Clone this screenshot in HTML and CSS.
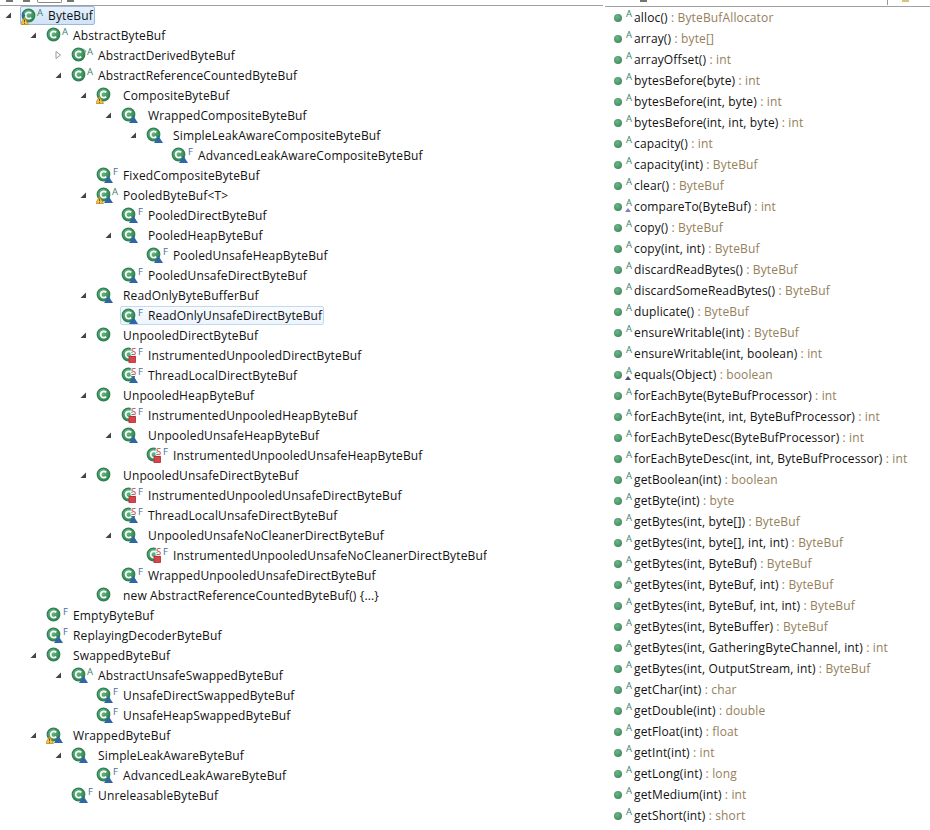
FILE: index.html
```html
<!DOCTYPE html>
<html lang="en">
<head>
<meta charset="utf-8">
<title>ByteBuf type hierarchy</title>
<link rel="stylesheet" href="styles.css">
</head>
<body>
<svg class="defs" width="0" height="0" aria-hidden="true">
  <defs>
    <radialGradient id="ball" cx="40%" cy="35%" r="70%"><stop offset="0" stop-color="#6fbb8c"/><stop offset="1" stop-color="#27824a"/></radialGradient>
    <symbol id="c" viewBox="0 0 28 20" width="28" height="20">
      <circle cx="7.5" cy="9.5" r="6.3" fill="url(#ball)" stroke="#2f7f50" stroke-width="1.2"/>
      <path d="M10.2 7.3A3.2 3.2 0 1 0 10.2 11.7" fill="none" stroke="#fff" stroke-width="1.7"/>
    </symbol>
    <symbol id="warn" viewBox="0 0 28 20" width="28" height="20">
      <path d="M3.5 11.5L7.5 18.5H-.5Z" fill="#f6c544" stroke="#b98a20" stroke-width=".8"/>
      <path d="M3.5 13.5V16M3.5 16.8V17.8" stroke="#7a4a10" stroke-width="1"/>
    </symbol>
    <symbol id="tri" viewBox="0 0 28 20" width="28" height="20">
      <path d="M12.5 11L17 18H8Z" fill="#2f66a8"/>
    </symbol>
    <symbol id="sq" viewBox="0 0 28 20" width="28" height="20">
      <rect x="8" y="11.5" width="6.5" height="6" fill="#d8444a" stroke="#b02a30" stroke-width=".8"/>
    </symbol>
    <symbol id="run" viewBox="0 0 28 20" width="28" height="20">
      <path d="M1 6L4.5 9.5L1 13Z" fill="#2f66a8"/>
    </symbol>
    <symbol id="der" viewBox="0 0 28 20" width="28" height="20">
      <path d="M12 3.5L15 6.5L12.5 8" fill="none" stroke="#4a9a6a" stroke-width="1"/>
    </symbol>
    <symbol id="open" viewBox="0 0 10 10" width="10" height="10">
      <path d="M8 2.5V8H2.5Z" fill="#444"/>
    </symbol>
    <symbol id="closed" viewBox="0 0 10 10" width="10" height="10">
      <path d="M3 1.5L7.5 5L3 8.5Z" fill="#fff" stroke="#999"/>
    </symbol>
  </defs>
</svg>
<div class="page">
  <div class="toolbar">
    <div class="tools-left"><i class="tick"></i><i class="tick"></i><i class="tab"></i><i class="tick"></i></div>
    <div class="tools-right"><i class="tick"></i><i class="sep"></i><i class="tick warm"></i></div>
  </div>
  <main class="panes">
    <section class="tree">
      <div class="row l0"><svg class="tw"><use href="#open"/></svg><span class="sel top"><svg class="ic"><use href="#c"/><use href="#run"/><use href="#warn"/><text x="16" y="10" class="a">A</text></svg><span class="nm">ByteBuf</span></span></div>
      <div class="row l1"><svg class="tw"><use href="#open"/></svg><svg class="ic"><use href="#c"/><text x="16" y="10" class="a">A</text></svg><span class="nm">AbstractByteBuf</span></div>
      <div class="row l2"><svg class="tw"><use href="#closed"/></svg><svg class="ic"><use href="#c"/><use href="#der"/><text x="16" y="10" class="a">A</text></svg><span class="nm">AbstractDerivedByteBuf</span></div>
      <div class="row l2"><svg class="tw"><use href="#open"/></svg><svg class="ic"><use href="#c"/><text x="16" y="10" class="a">A</text></svg><span class="nm">AbstractReferenceCountedByteBuf</span></div>
      <div class="row l3"><svg class="tw"><use href="#open"/></svg><svg class="ic"><use href="#c"/><use href="#warn"/></svg><span class="nm">CompositeByteBuf</span></div>
      <div class="row l4"><svg class="tw"><use href="#open"/></svg><svg class="ic"><use href="#c"/><use href="#tri"/></svg><span class="nm">WrappedCompositeByteBuf</span></div>
      <div class="row l5"><svg class="tw"><use href="#open"/></svg><svg class="ic"><use href="#c"/><use href="#tri"/></svg><span class="nm">SimpleLeakAwareCompositeByteBuf</span></div>
      <div class="row l6"><span class="tw"></span><svg class="ic"><use href="#c"/><use href="#tri"/><text x="17" y="10" class="f">F</text></svg><span class="nm">AdvancedLeakAwareCompositeByteBuf</span></div>
      <div class="row l3"><span class="tw"></span><svg class="ic"><use href="#c"/><use href="#tri"/><text x="17" y="10" class="f">F</text></svg><span class="nm">FixedCompositeByteBuf</span></div>
      <div class="row l3"><svg class="tw"><use href="#open"/></svg><svg class="ic"><use href="#c"/><use href="#warn"/><use href="#tri"/><text x="16" y="10" class="a">A</text></svg><span class="nm">PooledByteBuf&lt;T&gt;</span></div>
      <div class="row l4"><span class="tw"></span><svg class="ic"><use href="#c"/><use href="#tri"/><text x="17" y="10" class="f">F</text></svg><span class="nm">PooledDirectByteBuf</span></div>
      <div class="row l4"><svg class="tw"><use href="#open"/></svg><svg class="ic"><use href="#c"/><use href="#tri"/></svg><span class="nm">PooledHeapByteBuf</span></div>
      <div class="row l5"><span class="tw"></span><svg class="ic"><use href="#c"/><use href="#tri"/><text x="17" y="10" class="f">F</text></svg><span class="nm">PooledUnsafeHeapByteBuf</span></div>
      <div class="row l4"><span class="tw"></span><svg class="ic"><use href="#c"/><use href="#tri"/><text x="17" y="10" class="f">F</text></svg><span class="nm">PooledUnsafeDirectByteBuf</span></div>
      <div class="row l3"><svg class="tw"><use href="#open"/></svg><svg class="ic"><use href="#c"/><use href="#tri"/></svg><span class="nm">ReadOnlyByteBufferBuf</span></div>
      <div class="row l4"><span class="tw"></span><span class="sel"><svg class="ic"><use href="#c"/><use href="#tri"/><text x="17" y="10" class="f">F</text></svg><span class="nm">ReadOnlyUnsafeDirectByteBuf</span></span></div>
      <div class="row l3"><svg class="tw"><use href="#open"/></svg><svg class="ic"><use href="#c"/></svg><span class="nm">UnpooledDirectByteBuf</span></div>
      <div class="row l4"><span class="tw"></span><svg class="ic"><use href="#c"/><use href="#sq"/><text x="10" y="10" class="s">S</text><text x="17" y="10" class="f">F</text></svg><span class="nm">InstrumentedUnpooledDirectByteBuf</span></div>
      <div class="row l4"><span class="tw"></span><svg class="ic"><use href="#c"/><use href="#tri"/><text x="10" y="10" class="s">S</text><text x="17" y="10" class="f">F</text></svg><span class="nm">ThreadLocalDirectByteBuf</span></div>
      <div class="row l3"><svg class="tw"><use href="#open"/></svg><svg class="ic"><use href="#c"/></svg><span class="nm">UnpooledHeapByteBuf</span></div>
      <div class="row l4"><span class="tw"></span><svg class="ic"><use href="#c"/><use href="#sq"/><text x="10" y="10" class="s">S</text><text x="17" y="10" class="f">F</text></svg><span class="nm">InstrumentedUnpooledHeapByteBuf</span></div>
      <div class="row l4"><svg class="tw"><use href="#open"/></svg><svg class="ic"><use href="#c"/><use href="#tri"/></svg><span class="nm">UnpooledUnsafeHeapByteBuf</span></div>
      <div class="row l5"><span class="tw"></span><svg class="ic"><use href="#c"/><use href="#sq"/><text x="10" y="10" class="s">S</text><text x="17" y="10" class="f">F</text></svg><span class="nm">InstrumentedUnpooledUnsafeHeapByteBuf</span></div>
      <div class="row l3"><svg class="tw"><use href="#open"/></svg><svg class="ic"><use href="#c"/></svg><span class="nm">UnpooledUnsafeDirectByteBuf</span></div>
      <div class="row l4"><span class="tw"></span><svg class="ic"><use href="#c"/><use href="#sq"/><text x="10" y="10" class="s">S</text><text x="17" y="10" class="f">F</text></svg><span class="nm">InstrumentedUnpooledUnsafeDirectByteBuf</span></div>
      <div class="row l4"><span class="tw"></span><svg class="ic"><use href="#c"/><use href="#tri"/><text x="10" y="10" class="s">S</text><text x="17" y="10" class="f">F</text></svg><span class="nm">ThreadLocalUnsafeDirectByteBuf</span></div>
      <div class="row l4"><svg class="tw"><use href="#open"/></svg><svg class="ic"><use href="#c"/><use href="#tri"/></svg><span class="nm">UnpooledUnsafeNoCleanerDirectByteBuf</span></div>
      <div class="row l5"><span class="tw"></span><svg class="ic"><use href="#c"/><use href="#sq"/><text x="10" y="10" class="s">S</text><text x="17" y="10" class="f">F</text></svg><span class="nm">InstrumentedUnpooledUnsafeNoCleanerDirectByteBuf</span></div>
      <div class="row l4"><span class="tw"></span><svg class="ic"><use href="#c"/><use href="#tri"/><text x="17" y="10" class="f">F</text></svg><span class="nm">WrappedUnpooledUnsafeDirectByteBuf</span></div>
      <div class="row l3"><span class="tw"></span><svg class="ic"><use href="#c"/></svg><span class="nm">new AbstractReferenceCountedByteBuf() {...}</span></div>
      <div class="row l1"><span class="tw"></span><svg class="ic"><use href="#c"/><text x="17" y="10" class="f">F</text></svg><span class="nm">EmptyByteBuf</span></div>
      <div class="row l1"><span class="tw"></span><svg class="ic"><use href="#c"/><use href="#tri"/><text x="17" y="10" class="f">F</text></svg><span class="nm">ReplayingDecoderByteBuf</span></div>
      <div class="row l1"><svg class="tw"><use href="#open"/></svg><svg class="ic"><use href="#c"/></svg><span class="nm">SwappedByteBuf</span></div>
      <div class="row l2"><svg class="tw"><use href="#open"/></svg><svg class="ic"><use href="#c"/><use href="#tri"/><text x="16" y="10" class="a">A</text></svg><span class="nm">AbstractUnsafeSwappedByteBuf</span></div>
      <div class="row l3"><span class="tw"></span><svg class="ic"><use href="#c"/><use href="#tri"/><text x="17" y="10" class="f">F</text></svg><span class="nm">UnsafeDirectSwappedByteBuf</span></div>
      <div class="row l3"><span class="tw"></span><svg class="ic"><use href="#c"/><use href="#tri"/><text x="17" y="10" class="f">F</text></svg><span class="nm">UnsafeHeapSwappedByteBuf</span></div>
      <div class="row l1"><svg class="tw"><use href="#open"/></svg><svg class="ic"><use href="#c"/><use href="#warn"/><use href="#tri"/></svg><span class="nm">WrappedByteBuf</span></div>
      <div class="row l2"><svg class="tw"><use href="#open"/></svg><svg class="ic"><use href="#c"/><use href="#tri"/></svg><span class="nm">SimpleLeakAwareByteBuf</span></div>
      <div class="row l3"><span class="tw"></span><svg class="ic"><use href="#c"/><use href="#tri"/><text x="17" y="10" class="f">F</text></svg><span class="nm">AdvancedLeakAwareByteBuf</span></div>
      <div class="row l2"><span class="tw"></span><svg class="ic"><use href="#c"/><use href="#tri"/><text x="17" y="10" class="f">F</text></svg><span class="nm">UnreleasableByteBuf</span></div>
    </section>
    <section class="members">
      <div class="m"><i class="dot"></i><b class="ab">A</b>alloc()<span class="ty"> : ByteBufAllocator</span></div>
      <div class="m"><i class="dot"></i><b class="ab">A</b>array()<span class="ty"> : byte[]</span></div>
      <div class="m"><i class="dot"></i><b class="ab">A</b>arrayOffset()<span class="ty"> : int</span></div>
      <div class="m"><i class="dot"></i><b class="ab">A</b>bytesBefore(byte)<span class="ty"> : int</span></div>
      <div class="m"><i class="dot"></i><b class="ab">A</b>bytesBefore(int, byte)<span class="ty"> : int</span></div>
      <div class="m"><i class="dot"></i><b class="ab">A</b>bytesBefore(int, int, byte)<span class="ty"> : int</span></div>
      <div class="m"><i class="dot"></i><b class="ab">A</b>capacity()<span class="ty"> : int</span></div>
      <div class="m"><i class="dot"></i><b class="ab">A</b>capacity(int)<span class="ty"> : ByteBuf</span></div>
      <div class="m"><i class="dot"></i><b class="ab">A</b>clear()<span class="ty"> : ByteBuf</span></div>
      <div class="m"><i class="dot"></i><b class="ab ov">A</b>compareTo(ByteBuf)<span class="ty"> : int</span></div>
      <div class="m"><i class="dot"></i><b class="ab">A</b>copy()<span class="ty"> : ByteBuf</span></div>
      <div class="m"><i class="dot"></i><b class="ab">A</b>copy(int, int)<span class="ty"> : ByteBuf</span></div>
      <div class="m"><i class="dot"></i><b class="ab">A</b>discardReadBytes()<span class="ty"> : ByteBuf</span></div>
      <div class="m"><i class="dot"></i><b class="ab">A</b>discardSomeReadBytes()<span class="ty"> : ByteBuf</span></div>
      <div class="m"><i class="dot"></i><b class="ab">A</b>duplicate()<span class="ty"> : ByteBuf</span></div>
      <div class="m"><i class="dot"></i><b class="ab">A</b>ensureWritable(int)<span class="ty"> : ByteBuf</span></div>
      <div class="m"><i class="dot"></i><b class="ab">A</b>ensureWritable(int, boolean)<span class="ty"> : int</span></div>
      <div class="m"><i class="dot"></i><b class="ab ov dark">A</b>equals(Object)<span class="ty"> : boolean</span></div>
      <div class="m"><i class="dot"></i><b class="ab">A</b>forEachByte(ByteBufProcessor)<span class="ty"> : int</span></div>
      <div class="m"><i class="dot"></i><b class="ab">A</b>forEachByte(int, int, ByteBufProcessor)<span class="ty"> : int</span></div>
      <div class="m"><i class="dot"></i><b class="ab">A</b>forEachByteDesc(ByteBufProcessor)<span class="ty"> : int</span></div>
      <div class="m"><i class="dot"></i><b class="ab">A</b>forEachByteDesc(int, int, ByteBufProcessor)<span class="ty"> : int</span></div>
      <div class="m"><i class="dot"></i><b class="ab">A</b>getBoolean(int)<span class="ty"> : boolean</span></div>
      <div class="m"><i class="dot"></i><b class="ab">A</b>getByte(int)<span class="ty"> : byte</span></div>
      <div class="m"><i class="dot"></i><b class="ab">A</b>getBytes(int, byte[])<span class="ty"> : ByteBuf</span></div>
      <div class="m"><i class="dot"></i><b class="ab">A</b>getBytes(int, byte[], int, int)<span class="ty"> : ByteBuf</span></div>
      <div class="m"><i class="dot"></i><b class="ab">A</b>getBytes(int, ByteBuf)<span class="ty"> : ByteBuf</span></div>
      <div class="m"><i class="dot"></i><b class="ab">A</b>getBytes(int, ByteBuf, int)<span class="ty"> : ByteBuf</span></div>
      <div class="m"><i class="dot"></i><b class="ab">A</b>getBytes(int, ByteBuf, int, int)<span class="ty"> : ByteBuf</span></div>
      <div class="m"><i class="dot"></i><b class="ab">A</b>getBytes(int, ByteBuffer)<span class="ty"> : ByteBuf</span></div>
      <div class="m"><i class="dot"></i><b class="ab">A</b>getBytes(int, GatheringByteChannel, int)<span class="ty"> : int</span></div>
      <div class="m"><i class="dot"></i><b class="ab">A</b>getBytes(int, OutputStream, int)<span class="ty"> : ByteBuf</span></div>
      <div class="m"><i class="dot"></i><b class="ab">A</b>getChar(int)<span class="ty"> : char</span></div>
      <div class="m"><i class="dot"></i><b class="ab">A</b>getDouble(int)<span class="ty"> : double</span></div>
      <div class="m"><i class="dot"></i><b class="ab">A</b>getFloat(int)<span class="ty"> : float</span></div>
      <div class="m"><i class="dot"></i><b class="ab">A</b>getInt(int)<span class="ty"> : int</span></div>
      <div class="m"><i class="dot"></i><b class="ab">A</b>getLong(int)<span class="ty"> : long</span></div>
      <div class="m"><i class="dot"></i><b class="ab">A</b>getMedium(int)<span class="ty"> : int</span></div>
      <div class="m"><i class="dot"></i><b class="ab">A</b>getShort(int)<span class="ty"> : short</span></div>
    </section>
  </main>
</div>
</body>
</html>
```
FILE: styles.css
```css
html, body { margin: 0; padding: 0; background: #fff; }
body { width: 930px; height: 830px; overflow: hidden; font-family: "Open Sans", "Noto Sans", sans-serif; font-size: 12px; letter-spacing: .14px; color: #111; }
.defs { display: block; height: 0; }
.page { width: 930px; height: 830px; overflow: hidden; }
.toolbar { height: 5px; display: flex; overflow: hidden; }
.tools-left { display: flex; padding-left: 6px; width: 634px; flex: none; box-sizing: border-box; }
.tools-left .tick { margin-right: 10px; }
.tools-left .tab { margin-right: 5px; margin-left: -3px; }
.tools-right { display: flex; padding-left: 6px; }
.tools-right .sep { margin-left: 240px; }
.tools-right .warm { margin-left: 14px; }
.tick { display: block; width: 7px; height: 2px; background: #6e786e; }
.warm { background: #d9c27a; }
.sep { display: block; width: 1px; height: 5px; background: #999; }
.tab { display: block; width: 23px; height: 2px; border: 1px solid #888; border-top: 0; border-radius: 0 0 2px 2px; }
.panes { display: flex; }
.tree { width: 603px; flex: none; border-top: 1px solid #a0a0a0; }
.members { margin-left: 2px; margin-top: 1px; width: 325px; border-top: 1px solid #a0a0a0; padding-left: 7px; box-sizing: border-box; }
.row { height: 20px; width: 487px; display: flex; align-items: center; white-space: nowrap; overflow: hidden; box-sizing: border-box; }
.row:first-child { margin-top: -1px; }
.row.l0 { padding-left: 3px; }
.row.l1 { padding-left: 28px; }
.row.l2 { padding-left: 53px; }
.row.l3 { padding-left: 78px; }
.row.l4 { padding-left: 103px; }
.row.l5 { padding-left: 128px; }
.row.l6 { padding-left: 153px; }
.tw { display: block; width: 18px; height: 10px; flex: none; }
.ic { display: block; width: 27px; height: 20px; flex: none; overflow: visible; }
.ic text { font-size: 9.5px; font-family: "Open Sans", sans-serif; letter-spacing: 0; }
.a { fill: #3a7f6c; }
.f { fill: #4a6f9a; }
.ic .s { fill: #c0392b; paint-order: stroke; stroke: #fff; stroke-width: 2px; }
.nm { display: block; }
.sel { display: flex; align-items: center; align-self: flex-end; height: 19px; margin-left: -1px; padding: 0 1px 0 0; border: 1px solid #c5d9ee; border-radius: 2px; box-sizing: border-box; background: linear-gradient(#f7fbff, #edf5fd); }
.sel.top { background: linear-gradient(#e6f1fc, #cfe3f8); border-color: #9db8d6; }
.m { height: 21px; display: flex; align-items: center; white-space: pre; }
.dot { display: block; width: 8px; height: 8px; border-radius: 50%; background: radial-gradient(circle at 40% 35%, #6fb488, #2f8150); flex: none; margin: 0 4px 0 2px; }
.ab { display: block; position: relative; width: 8px; height: 21px; font-weight: 400; font-size: 9.5px; line-height: 13px; color: #3a7f6c; flex: none; letter-spacing: 0; }
.ov::after { content: ""; position: absolute; left: -1px; top: 12px; border: 3.5px solid transparent; border-bottom: 4px solid #8a7ac0; border-top: 0; }
.dark::after { border-bottom-color: #4a4a7a; }
.ty { color: #95805a; }
```
